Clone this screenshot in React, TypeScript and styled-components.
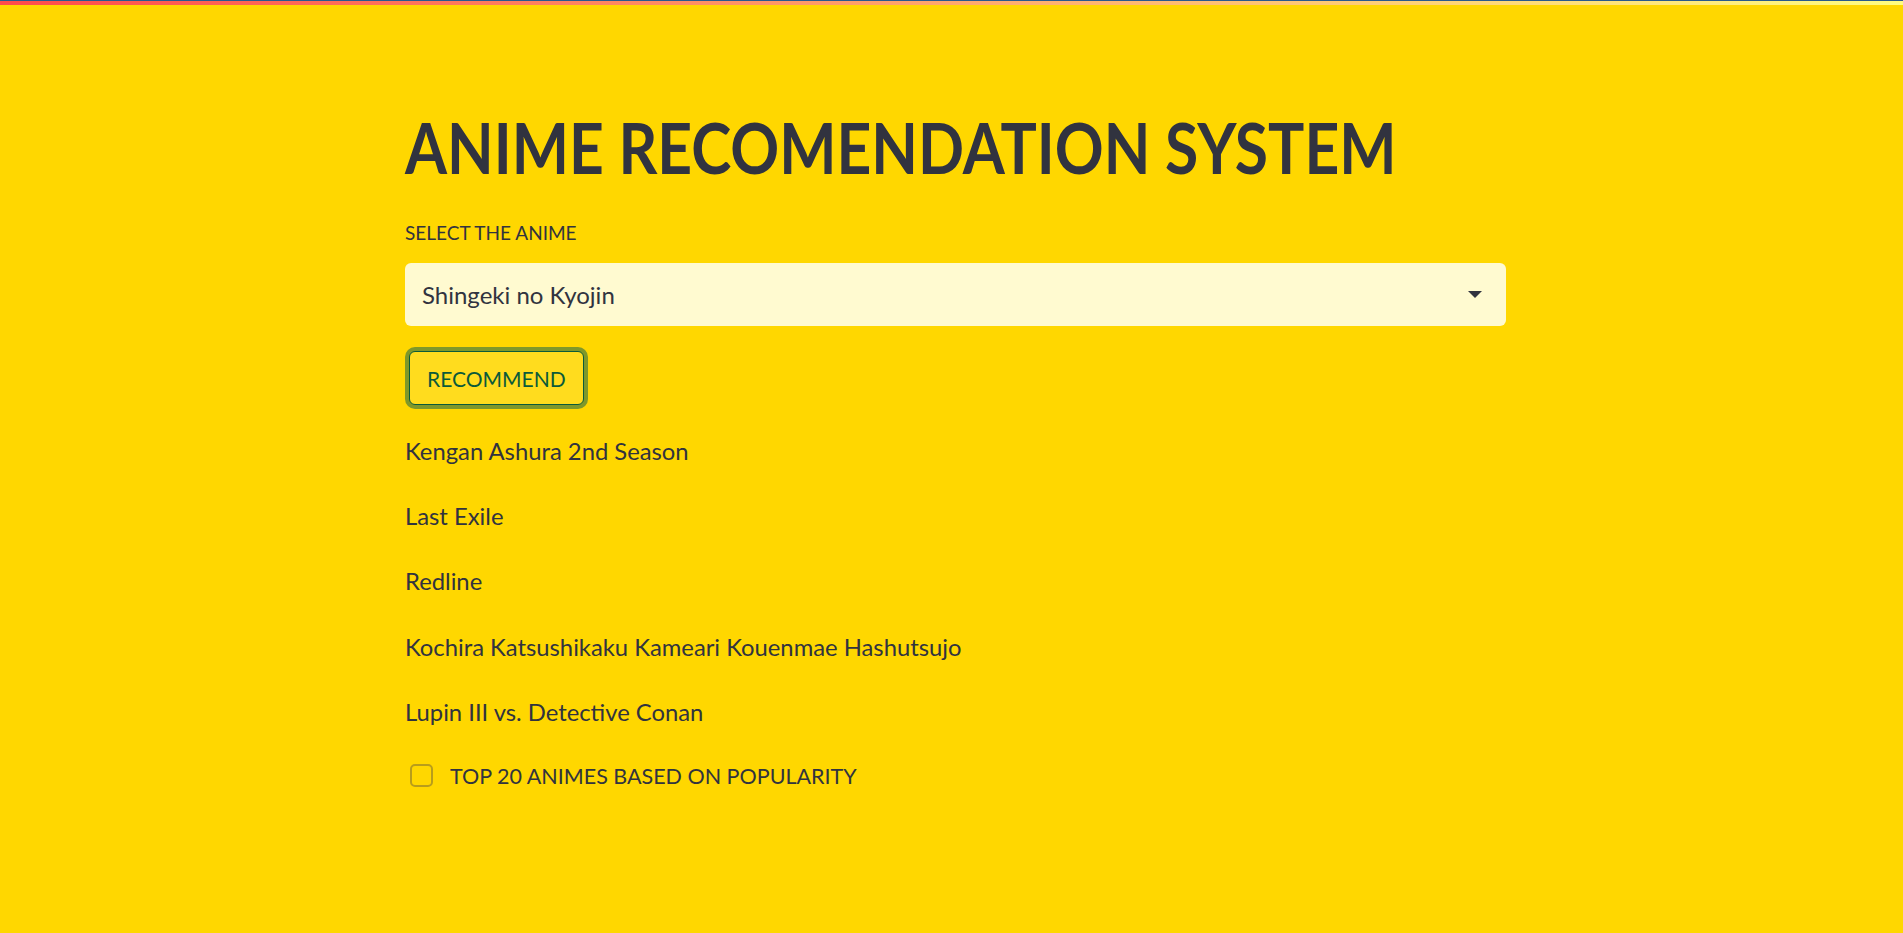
import React, { useState } from 'react';
import styled, { createGlobalStyle } from 'styled-components';

const GlobalStyle = createGlobalStyle`
  html, body {
    margin: 0;
    padding: 0;
    background: #ffd700;
  }
  body {
    font-family: Lato, "Open Sans", sans-serif;
    color: #31333f;
  }
`;

const Page = styled.div`
  min-height: 100vh;
  background: #ffd700;
`;

const Decoration = styled.div`
  height: 4px;
  border-top: 1px solid #2b5a8c;
  background: linear-gradient(90deg, #ff4b4b 0%, #ffb070 55%, #fffd80 100%);
`;

const Main = styled.main`
  width: 1101px;
  margin: 0 auto;
  padding: 100px 0 0 8px;
  display: flex;
  flex-direction: column;
`;

/* the original uses a condensed bold face; squeeze Lato to the same width */
const Title = styled.h1`
  margin: 0;
  font-size: 70px;
  font-weight: 700;
  line-height: 1.2;
  white-space: nowrap;
  color: #31333f;
  transform: scaleX(0.865);
  transform-origin: left center;
`;

const Label = styled.label`
  margin-top: 32px;
  font-size: 19px;
  line-height: 24px;
  color: #31333f;
`;

const Select = styled.div`
  margin-top: 18px;
  height: 63px;
  background: #fffad0;
  border-radius: 6px;
  display: flex;
  align-items: center;
  justify-content: space-between;
  padding: 0 24px 0 17px;
  font-size: 24px;
`;

const Caret = styled.span`
  width: 0;
  height: 0;
  border-left: 7px solid transparent;
  border-right: 7px solid transparent;
  border-top: 7px solid #31333f;
`;

const Button = styled.button`
  margin: 25px 0 0 4px;
  align-self: flex-start;
  height: 54px;
  padding: 0 17px;
  font-family: inherit;
  font-size: 21px;
  color: #0b5a3a;
  background: #ffdc1e;
  border: 1px solid #0b5a3a;
  border-radius: 6px;
  box-shadow: 0 0 0 4px #7f982a;
  cursor: pointer;
`;

const Results = styled.div`
  margin-top: 29px;
  display: flex;
  flex-direction: column;
`;

const ResultItem = styled.p`
  margin: 0;
  height: 65.2px;
  line-height: 34px;
  font-size: 23.8px;
`;

const CheckRow = styled.label`
  margin-top: 3px;
  display: flex;
  align-items: center;
  gap: 17px;
  padding-left: 5px;
  font-size: 21.5px;
  cursor: pointer;
`;

const Box = styled.span<{ $checked: boolean }>`
  width: 19px;
  height: 19px;
  border: 2px solid #b89d1b;
  border-radius: 5px;
  background: ${p => (p.$checked ? '#0b5a3a' : 'transparent')};
`;

const results = [
  'Kengan Ashura 2nd Season',
  'Last Exile',
  'Redline',
  'Kochira Katsushikaku Kameari Kouenmae Hashutsujo',
  'Lupin III vs. Detective Conan',
];

const App: React.FC = () => {
  const [checked, setChecked] = useState(false);
  return (
    <Page>
      <GlobalStyle />
      <Decoration />
      <Main>
        <Title>ANIME RECOMENDATION SYSTEM</Title>
        <Label>SELECT THE ANIME</Label>
        <Select>
          <span>Shingeki no Kyojin</span>
          <Caret />
        </Select>
        <Button>RECOMMEND</Button>
        <Results>
          {results.map(r => (
            <ResultItem key={r}>{r}</ResultItem>
          ))}
        </Results>
        <CheckRow onClick={() => setChecked(!checked)}>
          <Box $checked={checked} />
          TOP 20 ANIMES BASED ON POPULARITY
        </CheckRow>
      </Main>
    </Page>
  );
};

export default App;
